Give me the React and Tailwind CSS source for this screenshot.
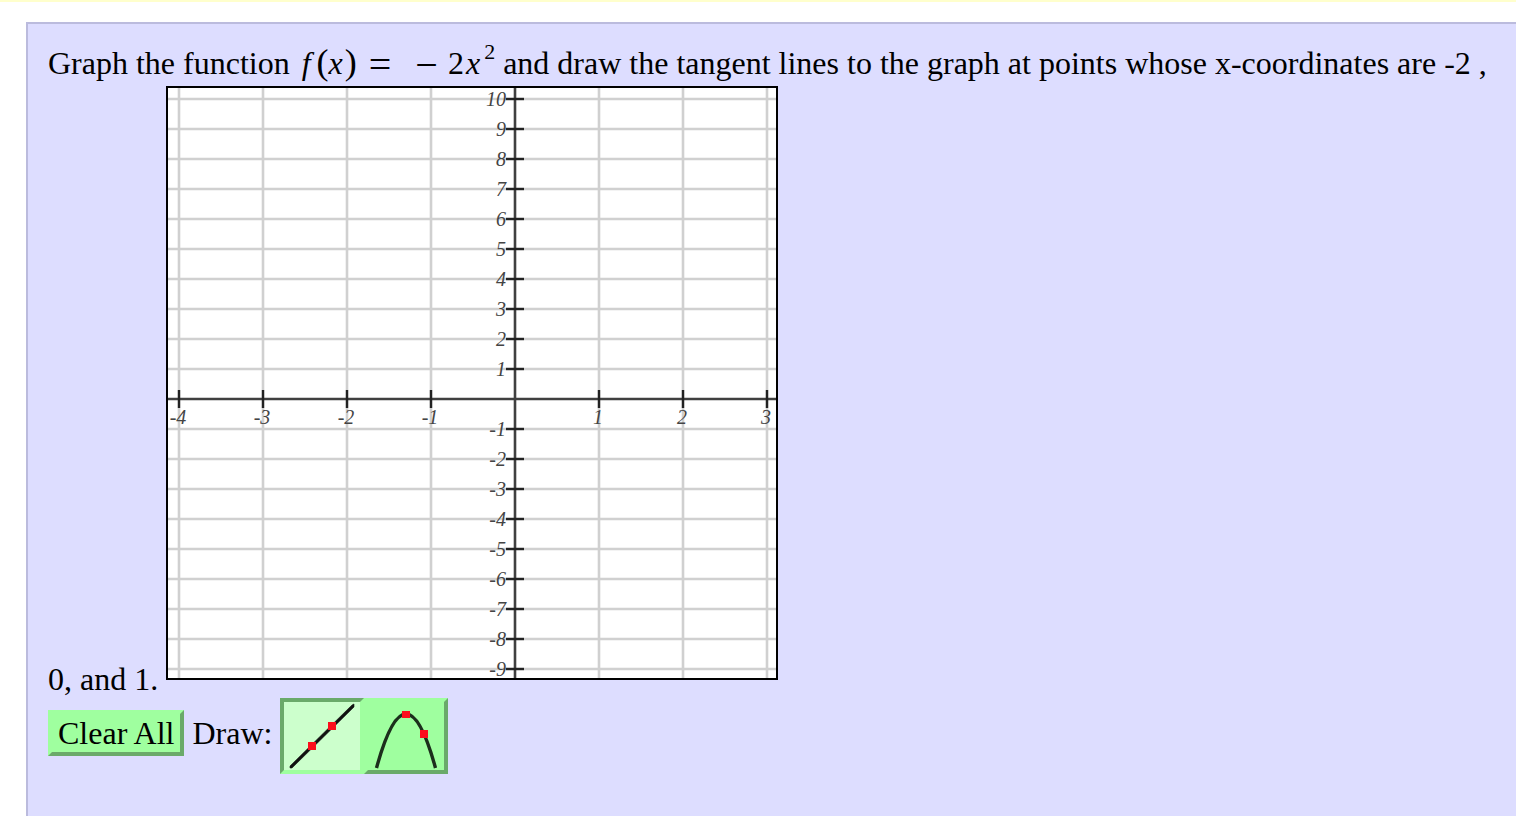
import { useState } from 'react'

// Graph window: 84px per unit across, 30px per unit up
const X_TICKS = [-4, -3, -2, -1, 1, 2, 3]
const Y_TICKS = [10, 9, 8, 7, 6, 5, 4, 3, 2, 1, -1, -2, -3, -4, -5, -6, -7, -8, -9]

const toX = (x) => 347 + x * 84
const toY = (y) => 311 - y * 30

const LineIcon = () => (
    <svg viewBox="0 0 76 68" className="block w-[76px] h-[68px]" aria-hidden="true">
        <path d="M6 66 L8 66 L70 5 L70 2 L68 3 L6 64 Z" fill="#111" stroke="#111" strokeWidth="0.6" />
        <rect x="24" y="40" width="8" height="8" fill="#fb0f1c" />
        <rect x="44" y="20" width="8" height="8" fill="#fb0f1c" />
    </svg>
)

const ParabolaIcon = () => (
    <svg viewBox="0 0 76 68" className="block w-[76px] h-[68px]" aria-hidden="true">
        <path d="M8.5 66 Q38 -42 67.5 66" fill="none" stroke="#1c2f1c" strokeWidth="3.4" />
        <rect x="34" y="9" width="8" height="7" fill="#fb0f1c" />
        <rect x="52" y="28" width="8" height="8" fill="#fb0f1c" />
    </svg>
)

const tools = [
    { id: 'line',     label: 'Line',     icon: LineIcon },
    { id: 'parabola', label: 'Parabola', icon: ParabolaIcon },
]

function Graph() {
    return (
        <svg
            viewBox="0 0 608 590"
            role="img"
            aria-label="Coordinate grid"
            className="inline-block box-content w-[608px] h-[590px] mt-[5px] align-[10px] border-2 border-black bg-white"
        >
            {/* Grid */}
            <g stroke="#d0d0d0" strokeWidth="2.6">
                {X_TICKS.map((x) => <line key={x} x1={toX(x)} x2={toX(x)} y1="0" y2="590" />)}
                {Y_TICKS.map((y) => <line key={y} x1="0" x2="608" y1={toY(y)} y2={toY(y)} />)}
            </g>

            {/* Axes and ticks */}
            <g stroke="#404040" strokeWidth="2.6">
                <line x1="0" x2="608" y1="311" y2="311" />
                <line x1="347" x2="347" y1="0" y2="590" />
            </g>
            <g stroke="#222" strokeWidth="2.4">
                {X_TICKS.map((x) => <line key={x} x1={toX(x)} x2={toX(x)} y1="302" y2="320" />)}
                {Y_TICKS.map((y) => <line key={y} x1="338" x2="356" y1={toY(y)} y2={toY(y)} />)}
            </g>

            {/* Labels */}
            <g fill="#444" fontSize="20" fontStyle="italic">
                {X_TICKS.map((x) => <text key={x} x={toX(x) - 1} y="336" textAnchor="middle">{x}</text>)}
                {Y_TICKS.map((y) => <text key={y} x="338" y={toY(y) + 7} textAnchor="end">{y}</text>)}
            </g>
        </svg>
    )
}

function Formula() {
    return (
        <span className="whitespace-nowrap">
            <i className="ml-1 mr-1.5">f</i>
            <span className="text-[36px] leading-[0]">(</span>
            <i>x</i>
            <span className="ml-0.5 text-[36px] leading-[0]">)</span>
            <span className="ml-3 text-[40px] leading-[0] align-[-4px]">=</span>
            <span className="ml-6 text-[40px] leading-[0] align-[-4px]">−</span>
            <span className="ml-2.5">2</span>
            <i className="ml-0.5">x</i>
            <sup className="ml-1 top-0 align-[15px] text-[22px]">2</sup>
        </span>
    )
}

export default function App() {
    const [tool, setTool] = useState('line')

    return (
        <div className="min-h-screen flex flex-col bg-white border-t-2 border-[#ffffcc] text-black font-['Liberation_Serif',serif] text-[32px] leading-9">
            <main className="flex-1 mt-5 ml-[26px] pt-[21px] px-5 border-t-2 border-l-2 border-[#bbbbdd] bg-[#ddddff]">
                <p>
                    <span>Graph the function </span>
                    <Formula />
                    <span> and draw the tangent lines to the graph at points whose x-coordinates are -2 , </span>
                    <span>0, and 1. </span>
                    <Graph />
                </p>

                {/* Toolbar */}
                <div className="mt-px flex items-start gap-2">
                    <div className="mt-3 flex items-baseline gap-2">
                        <button
                            type="button"
                            onClick={() => setTool('line')}
                            className="px-1.5 py-px bg-[#9fff9f] border-4 border-t-[#9fff9f] border-l-[#9fff9f] border-r-[#6aaa6a] border-b-[#6aaa6a] whitespace-nowrap"
                        >
                            Clear All
                        </button>
                        <span>Draw:</span>
                    </div>
                    <div className="flex">
                        {tools.map((t) => (
                            <button
                                key={t.id}
                                type="button"
                                aria-label={t.label}
                                aria-pressed={tool === t.id}
                                onClick={() => setTool(t.id)}
                                className={tool === t.id
                                    ? 'border-4 bg-[#ccffcc] border-t-[#6aaa6a] border-l-[#6aaa6a] border-r-[#9fff9f] border-b-[#9fff9f]'
                                    : 'border-4 bg-[#9fff9f] border-t-[#9fff9f] border-l-[#9fff9f] border-r-[#6aaa6a] border-b-[#6aaa6a]'}
                            >
                                <t.icon />
                            </button>
                        ))}
                    </div>
                </div>
            </main>
        </div>
    )
}
